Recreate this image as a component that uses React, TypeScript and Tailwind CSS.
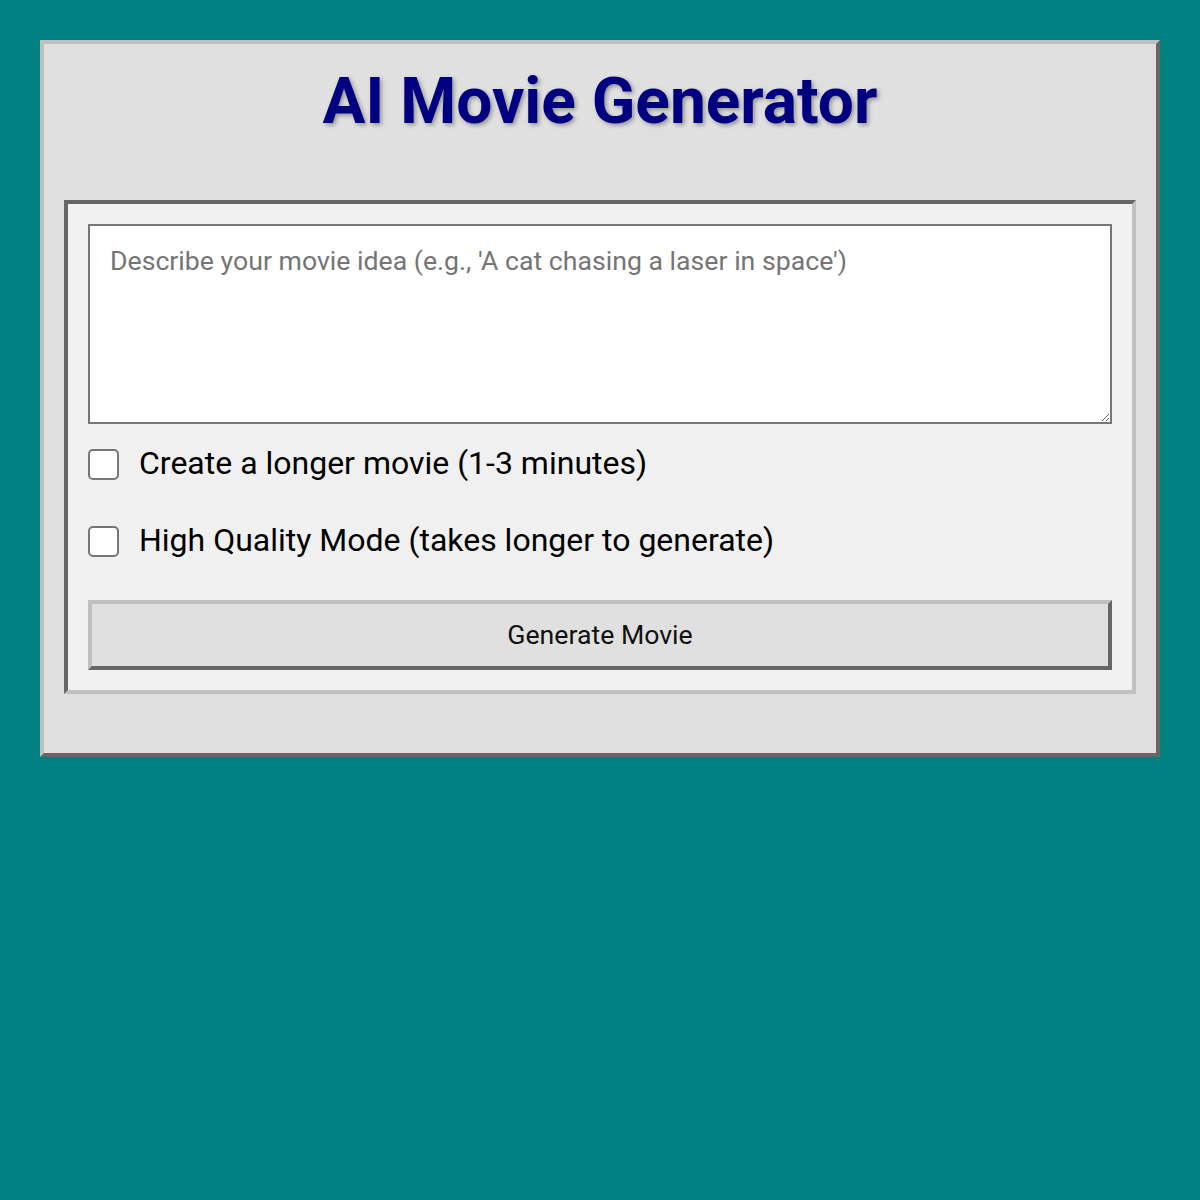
import { useState } from "react";

// Retro bevelled form for the movie generator
export default function App() {
  const [idea, setIdea] = useState("");
  const [longer, setLonger] = useState(false);
  const [hq, setHq] = useState(false);

  const options = [
    { label: "Create a longer movie (1-3 minutes)", checked: longer, set: setLonger, gap: "mb-[37px]" },
    { label: "High Quality Mode (takes longer to generate)", checked: hq, set: setHq, gap: "mb-[39px]" }
  ];

  return (
    <div className="min-h-[1200px] bg-[#008080] pt-[40px] px-[40px] font-['Roboto',sans-serif]">
      <div className="bg-[#e0e0e0] border-4 border-t-[#c0c0c0] border-l-[#c0c0c0] border-r-[#666] border-b-[#666] px-[20px] pt-[20px] pb-[59px]">
        <h1 className="text-center text-[64px] font-bold leading-[75px] text-[#000080] mb-[61px] [text-shadow:2px_2px_4px_rgba(0,0,0,0.35)]">
          AI Movie Generator
        </h1>

        <div className="bg-[#f0f0f0] border-4 border-t-[#666] border-l-[#666] border-r-[#c0c0c0] border-b-[#c0c0c0] p-[20px] flex flex-col">
          <textarea
            value={idea}
            onChange={(e) => setIdea(e.target.value)}
            placeholder="Describe your movie idea (e.g., 'A cat chasing a laser in space')"
            className="h-[200px] w-full bg-white border-2 border-[#767676] px-[20px] pt-[20px] pb-[19px] text-[26.67px] leading-[31px] text-black placeholder:text-[#757575] outline-none mb-[20px]"
          />

          {options.map((opt) => (
            <label key={opt.label} className={`flex items-center h-[40px] gap-[20px] cursor-pointer ${opt.gap}`}>
              <input
                type="checkbox"
                checked={opt.checked}
                onChange={(e) => opt.set(e.target.checked)}
                className="appearance-none w-[31px] h-[31px] m-0 bg-white border-2 border-[#767676] rounded-[5px] checked:bg-[#0075ff] checked:border-[#0075ff]"
              />
              <span className="text-[32px] leading-[37px] text-black -mt-[2px]">{opt.label}</span>
            </label>
          ))}

          <button
            type="button"
            className="h-[70px] w-full bg-[#e0e0e0] border-4 border-t-[#c0c0c0] border-l-[#c0c0c0] border-r-[#666] border-b-[#666] text-[26.67px] text-[#111]"
          >
            Generate Movie
          </button>
        </div>
      </div>
    </div>
  );
}
